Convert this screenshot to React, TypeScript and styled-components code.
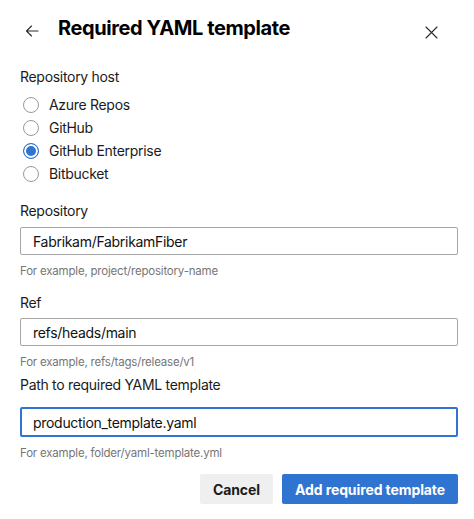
import React, { useEffect, useRef, useState } from "react";
import styled, { createGlobalStyle } from "styled-components";

const GlobalStyle = createGlobalStyle`
  html, body {
    margin: 0;
    padding: 0;
    background: #ffffff;
  }
  body {
    font-family: Inter, "Noto Sans", "Liberation Sans", sans-serif;
    color: #1b1b1b;
  }
`;

const Panel = styled.div`
  width: 474px;
  height: 519px;
  box-sizing: border-box;
  padding: 8px 16px 0 20px;
  display: flex;
  flex-direction: column;
`;

const Header = styled.div`
  display: flex;
  align-items: center;
  height: 46px;
`;

const IconButton = styled.button`
  display: flex;
  align-items: center;
  justify-content: center;
  width: 24px;
  height: 24px;
  padding: 0;
  border: none;
  background: transparent;
  color: #2b2b2b;
  cursor: pointer;
`;

const Title = styled.h1`
  flex: 1;
  margin: -6px 0 0 14px;
  font-size: 20px;
  font-weight: 700;
  letter-spacing: -0.4px;
  color: #000;
`;

const CloseButton = styled(IconButton)`
  margin: 2px 15px 0 0;
`;

const Label = styled.div<{ $top: number }>`
  margin-top: ${(p) => p.$top}px;
  font-size: 14px;
  letter-spacing: -0.3px;
  line-height: 20px;
  color: #1b1b1b;
`;

const RadioGroup = styled.div`
  display: flex;
  flex-direction: column;
  margin-top: 6px;
`;

const RadioRow = styled.label`
  display: flex;
  align-items: center;
  height: 23px;
  font-size: 14px;
  letter-spacing: -0.3px;
  color: #1b1b1b;
  cursor: pointer;
`;

const RadioDot = styled.span<{ $checked: boolean }>`
  box-sizing: border-box;
  width: 16px;
  height: 16px;
  margin: 0 10px 0 3px;
  border-radius: 50%;
  border: 1px solid ${(p) => (p.$checked ? "#2f74d0" : "#9a9a9a")};
  background: ${(p) => (p.$checked ? "#2f74d0" : "#fff")};
  box-shadow: ${(p) => (p.$checked ? "inset 0 0 0 2px #fff" : "none")};
`;

const Input = styled.input<{ $top: number; $focused?: boolean }>`
  box-sizing: border-box;
  width: 100%;
  height: ${(p) => (p.$focused ? 30 : 28)}px;
  margin-top: ${(p) => p.$top}px;
  padding: 0 12px;
  font-family: inherit;
  font-size: 14px;
  letter-spacing: -0.3px;
  color: #111;
  background: #fff;
  border: ${(p) => (p.$focused ? "2px solid #2f74d0" : "1px solid #a6a6a6")};
  border-radius: 2px;
  outline: none;
  caret-color: #2f74d0;
  ${(p) => (p.$focused ? "padding-left: 11px;" : "")}
`;

const Helper = styled.div`
  margin-top: 8px;
  font-size: 11.5px;
  letter-spacing: -0.2px;
  line-height: 16px;
  color: #767676;
`;

const Footer = styled.div`
  display: flex;
  justify-content: flex-end;
  gap: 9px;
  margin-top: 13px;
`;

const Button = styled.button<{ $primary?: boolean }>`
  height: 30px;
  padding: 0 13px;
  border: none;
  border-radius: 2px;
  font-family: inherit;
  font-size: 14px;
  font-weight: 700;
  letter-spacing: -0.1px;
  color: ${(p) => (p.$primary ? "#fff" : "#1b1b1b")};
  background: ${(p) => (p.$primary ? "#2f74d0" : "#efefef")};
  cursor: pointer;
`;

const hosts = ["Azure Repos", "GitHub", "GitHub Enterprise", "Bitbucket"];

export default function App() {
  const [host, setHost] = useState("GitHub Enterprise");
  const [repo, setRepo] = useState("Fabrikam/FabrikamFiber");
  const [ref, setRef] = useState("refs/heads/main");
  const [path, setPath] = useState("production_template.yaml");
  const pathInput = useRef<HTMLInputElement>(null);

  useEffect(() => {
    const el = pathInput.current;
    if (!el) return;
    el.focus();
    el.setSelectionRange(el.value.length, el.value.length);
  }, []);

  return (
    <>
      <GlobalStyle />
      <Panel>
        <Header>
          <IconButton aria-label="Back">
            <svg width="14" height="12" viewBox="0 0 14 12" fill="none">
              <path
                d="M13 6H1.5M6.5 1L1.5 6l5 5"
                stroke="currentColor"
                strokeWidth="1.1"
                strokeLinecap="round"
                strokeLinejoin="round"
              />
            </svg>
          </IconButton>
          <Title>Required YAML template</Title>
          <CloseButton aria-label="Close">
            <svg width="13" height="13" viewBox="0 0 13 13" fill="none">
              <path
                d="M1 1l11 11M12 1L1 12"
                stroke="currentColor"
                strokeWidth="1.1"
                strokeLinecap="round"
              />
            </svg>
          </CloseButton>
        </Header>

        <Label $top={13}>Repository host</Label>
        <RadioGroup>
          {hosts.map((h) => (
            <RadioRow key={h} onClick={() => setHost(h)}>
              <RadioDot $checked={host === h} />
              {h}
            </RadioRow>
          ))}
        </RadioGroup>

        <Label $top={16}>Repository</Label>
        <Input $top={6} value={repo} onChange={(e) => setRepo(e.target.value)} />
        <Helper>For example, project/repository-name</Helper>

        <Label $top={14}>Ref</Label>
        <Input $top={5} value={ref} onChange={(e) => setRef(e.target.value)} />
        <Helper>For example, refs/tags/release/v1</Helper>

        <Label $top={5}>Path to required YAML template</Label>
        <Input
          ref={pathInput}
          $top={12}
          $focused
          value={path}
          onChange={(e) => setPath(e.target.value)}
        />
        <Helper>For example, folder/yaml-template.yml</Helper>

        <Footer>
          <Button>Cancel</Button>
          <Button $primary>Add required template</Button>
        </Footer>
      </Panel>
    </>
  );
}
